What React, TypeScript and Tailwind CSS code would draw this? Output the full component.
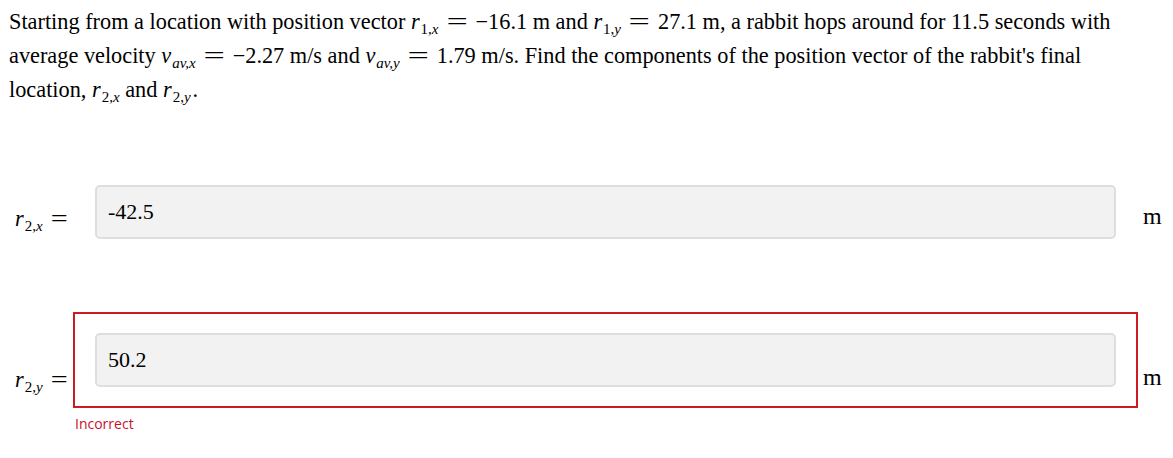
import type { ReactNode } from "react"

type VarProps = {
  base: string
  sub: ReactNode
}

function Var({ base, sub }: VarProps) {
  return (
    <span className="whitespace-nowrap">
      <span className="italic">{base}</span>
      <span className="relative top-[5px] ml-[1px] text-[15px] leading-none">{sub}</span>
    </span>
  )
}

function Eq() {
  return (
    <span className="inline-block w-[37px] text-center">
      <span className="inline-block scale-x-[1.7]">=</span>
    </span>
  )
}

function LabelEq() {
  return (
    <span className="ml-[8px] inline-block w-[17px] text-center">
      <span className="inline-block scale-x-[1.35]">=</span>
    </span>
  )
}

function Row({
  label,
  value,
  incorrect,
}: {
  label: ReactNode
  value: string
  incorrect?: boolean
}) {
  return (
    <div className="grid grid-cols-[64px_1065px_1fr] items-center">
      <div className="whitespace-nowrap pl-[6px] pt-[14px]">{label}</div>
      <div className="flex flex-col">
        <div
          className={
            incorrect
              ? "border-2 border-[#cd1b24] px-5 py-[19px]"
              : "border-2 border-transparent px-5 py-[19px]"
          }
        >
          <div className="h-[54px] rounded-[5px] border-2 border-[#dedede] bg-[#f2f2f2] pl-[11px] pt-[13px] font-['Liberation_Serif',serif] text-[22px] leading-[24px]">
            {value}
          </div>
        </div>
        {incorrect && (
          <div className="mt-[6px] pl-[2px] font-['Open_Sans',sans-serif] text-[14px] leading-5 text-[#c8102e]">
            Incorrect
          </div>
        )}
      </div>
      <div className="pl-[5px] pt-[8px] text-[24px]">m</div>
    </div>
  )
}

export default function App() {
  return (
    <div className="min-h-screen bg-white px-[9px] pt-[5px] font-['Liberation_Serif',serif] text-[22.3px] leading-[34px] text-black">
      <p className="max-w-[1135px]">
        Starting from a location with position vector{" "}
        <Var base="r" sub={<>1,<i>x</i></>} />
        <Eq />
        −16.1 m and <Var base="r" sub={<>1,<i>y</i></>} />
        <Eq />
        27.1 m, a rabbit hops around for 11.5 seconds with average velocity{" "}
        <Var base="v" sub={<i>av,x</i>} />
        <Eq />
        −2.27 m/s and <Var base="v" sub={<i>av,y</i>} />
        <Eq />
        1.79 m/s. Find the components of the position vector of the rabbit's
        final location, <Var base="r" sub={<>2,<i>x</i></>} /> and{" "}
        <Var base="r" sub={<>2,<i>y</i></>} />
        <span className="ml-[2px]">.</span>
      </p>

      <div className="mt-[57px] flex flex-col gap-[52px]">
        <Row
          label={
            <>
              <Var base="r" sub={<>2,<i>x</i></>} />
              <LabelEq />
            </>
          }
          value="-42.5"
        />
        <Row
          label={
            <>
              <Var base="r" sub={<>2,<i>y</i></>} />
              <LabelEq />
            </>
          }
          value="50.2"
          incorrect
        />
      </div>
    </div>
  )
}
